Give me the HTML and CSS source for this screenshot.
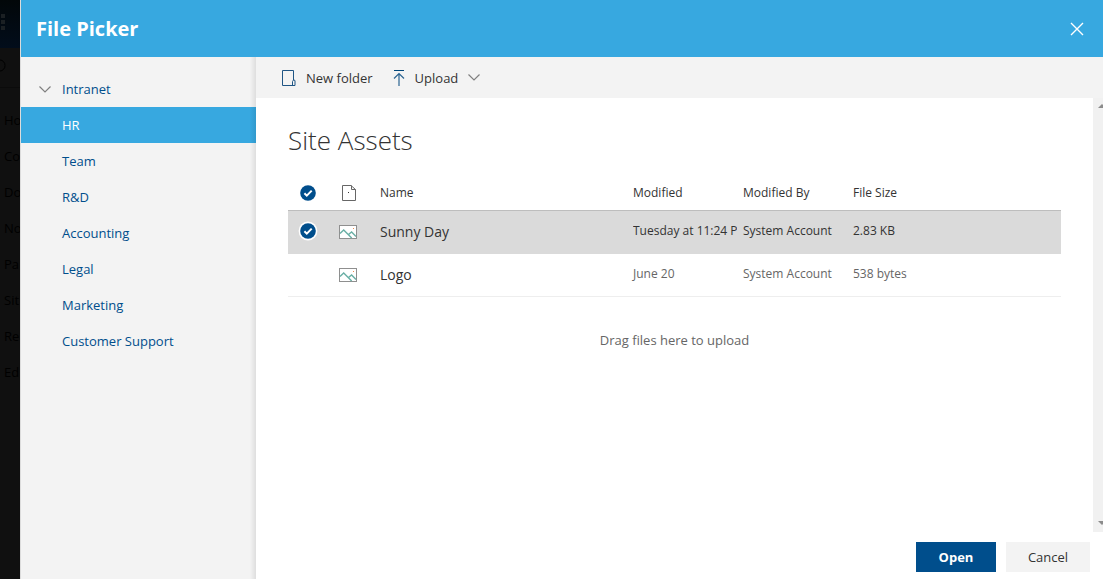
FILE: index.html
```html
<!DOCTYPE html>
<html lang="en">
<head>
<meta charset="utf-8">
<title>File Picker</title>
<link rel="stylesheet" href="styles.css">
</head>
<body>
<svg class="defs" aria-hidden="true">
  <symbol id="check" viewBox="0 0 20 20">
    <circle cx="10" cy="10" r="9.4" fill="#fff"/>
    <circle cx="10" cy="10" r="7.8" fill="#004e8c"/>
    <path d="M6.4 10.2l2.4 2.4 4.9-5" fill="none" stroke="#fff" stroke-width="2"/>
  </symbol>
  <symbol id="picture" viewBox="0 0 18 14">
    <rect x=".5" y=".5" width="17" height="13" fill="#fff" stroke="#8f8f8f"/>
    <path d="M1 8.5L4.7 5l8 8M9.5 9.5L12.6 7 17 11.5" fill="none" stroke="#69afa5" stroke-width="1.4"/>
    <rect x="14" y="3" width="1" height="1" fill="#f08a50"/>
  </symbol>
  <symbol id="chevron" viewBox="0 0 12 7">
    <path d="M.5.5L6 6 11.5.5" fill="none" stroke="#808080" stroke-width="1.2"/>
  </symbol>
</svg>
<div class="screen">
  <div class="backdrop" aria-hidden="true">
    <div class="suite"><svg width="5" height="17" viewBox="0 0 5 17"><path d="M1 0h4v4H1zM1 6h4v4H1zM1 12h4v4H1z" fill="#1b2023"/></svg></div>
    <div class="search"><svg width="6" height="14" viewBox="0 0 6 14"><path d="M0 1a5 5.5 0 0 1 0 11" fill="none" stroke="#000"/></svg></div>
    <ul class="under">
      <li>Ho</li><li>Co</li><li>Do</li><li>No</li><li>Pa</li><li>Sit</li><li>Re</li><li>Ed</li>
    </ul>
  </div>
  <div class="dialog" role="dialog" aria-labelledby="title">
    <header class="header">
      <h1 id="title">File Picker</h1>
      <button class="close" aria-label="Close"><svg width="14" height="14" viewBox="0 0 14 14"><path d="M1 1l12 12M13 1L1 13" stroke="#fff" stroke-width="1.4"/></svg></button>
    </header>
    <div class="body">
      <nav class="nav">
        <div class="node"><button class="toggle" aria-label="Collapse Intranet"><svg width="12" height="7"><use href="#chevron"/></svg></button><a href="#">Intranet</a></div>
        <div class="node selected"><a href="#">HR</a></div>
        <div class="node"><a href="#">Team</a></div>
        <div class="node"><a href="#">R&amp;D</a></div>
        <div class="node"><a href="#">Accounting</a></div>
        <div class="node"><a href="#">Legal</a></div>
        <div class="node"><a href="#">Marketing</a></div>
        <div class="node"><a href="#">Customer Support</a></div>
      </nav>
      <main class="main">
        <div class="toolbar">
          <button class="command"><svg width="14" height="16" viewBox="0 0 14 16"><path d="M11 15.5H.5V.5h11V10M10.5 15.5v-4l1-1.5h1l.5 1v4.500z" fill="none" stroke="#1f5584"/></svg>New folder</button>
          <button class="command"><svg width="12" height="16" viewBox="0 0 12 16"><path d="M1 .5h10" stroke="#004578"/><path d="M6 16V4M1 8.5L6 3.5l5 5" fill="none" stroke="#2c6592" stroke-width="1.2"/></svg>Upload<svg width="12" height="7"><use href="#chevron"/></svg></button>
        </div>
        <div class="scroller">
          <section class="content">
            <h2>Site Assets</h2>
            <table>
              <colgroup><col class="c-check"><col class="c-icon"><col><col class="c-meta"><col class="c-meta"><col class="c-size"></colgroup>
              <thead>
                <tr>
                  <th><svg width="20" height="20" role="img" aria-label="All selected"><use href="#check"/></svg></th>
                  <th><svg class="doc" width="14" height="16" viewBox="0 0 14 16" role="img" aria-label="File type"><path d="M.5.5H9L13.5 4.5v11H.5zM9.5 .5v4h4" fill="none" stroke="#666"/><rect x="6" y="7" width="1" height="1" fill="#333"/></svg></th>
                  <th>Name</th><th>Modified</th><th>Modified By</th><th>File Size</th>
                </tr>
              </thead>
              <tbody>
                <tr class="picked">
                  <td><svg width="20" height="20" role="img" aria-label="Selected"><use href="#check"/></svg></td>
                  <td class="icon"><svg width="18" height="14"><use href="#picture"/></svg></td>
                  <td class="name">Sunny Day</td><td><div class="clip">Tuesday at 11:24 P</div></td><td>System Account</td><td>2.83 KB</td>
                </tr>
                <tr>
                  <td></td>
                  <td class="icon"><svg width="18" height="14"><use href="#picture"/></svg></td>
                  <td class="name">Logo</td><td>June 20</td><td>System Account</td><td>538 bytes</td>
                </tr>
              </tbody>
            </table>
            <p class="drop">Drag files here to upload</p>
          </section>
          <div class="track" aria-hidden="true">
            <svg width="5" height="4" viewBox="0 0 5 4"><path d="M0 4L4 0l4 4z" fill="#8c8c8c"/></svg>
            <svg width="5" height="4" viewBox="0 0 5 4"><path d="M0 0h8L4 4z" fill="#8c8c8c"/></svg>
          </div>
        </div>
        <footer class="footer">
          <button class="action primary">Open</button>
          <button class="action cancel">Cancel</button>
        </footer>
      </main>
    </div>
  </div>
</div>
</body>
</html>
```
FILE: styles.css
```css
* { box-sizing: border-box; }
body {
  margin: 0;
  font: 13px/20px "Open Sans", "Noto Sans", sans-serif;
  color: #333;
  background: #fff;
}
button { border: 0; padding: 0; background: none; font: inherit; color: inherit; }
svg { display: block; flex: none; }
h1, h2, p, ul { margin: 0; padding: 0; }
.defs { position: absolute; width: 0; height: 0; }

.screen { display: flex; min-height: 100vh; }
.backdrop { flex: none; width: 20px; overflow: hidden; background: #101010; }
.suite { height: 48px; padding-top: 14px; background: linear-gradient(#020709, #020d1b); }
.search { height: 40px; padding-top: 11px; border-bottom: 1px solid #0b0b0b; }
.under { padding: 14px 0 0 4px; list-style: none; color: #000; white-space: nowrap; }
.under li { height: 36px; line-height: 36px; }

.dialog { flex: 1; min-width: 0; display: flex; flex-direction: column; border-left: 1px solid #dcdcdc; }
.header {
  display: flex;
  align-items: center;
  justify-content: space-between;
  height: 57px;
  padding: 0 19px 0 15px;
  background: #37a8e0;
  color: #fff;
}
.header h1 { font-size: 20px; line-height: 28px; font-weight: 700; }
.close { height: 16px; }

.body { flex: 1; display: flex; }
.nav {
  flex: none;
  width: 235px;
  padding-top: 14px;
  background: linear-gradient(to left, #dedede, #f3f3f3 6px);
}
.node { display: flex; align-items: center; height: 36px; padding-left: 18px; color: #004e8c; }
.node a { color: inherit; text-decoration: none; margin-left: 23px; }
.toggle { width: 12px; }
.toggle + a { margin-left: 11px; }
.selected { background: linear-gradient(to left, #3199cc, #37a8e0 6px); color: #fff; }

.main { flex: 1; min-width: 0; display: flex; flex-direction: column; }
.toolbar { display: flex; gap: 20px; height: 41px; padding: 0 26px; background: #f3f3f3; }
.command { display: flex; align-items: center; gap: 10px; }
.scroller { flex: 1; display: flex; }
.content { flex: 1; min-width: 0; padding: 24px 32px 0; }
.content h2 { font-size: 26px; line-height: 36px; font-weight: 300; margin-bottom: 18px; }

table { width: 100%; table-layout: fixed; border-collapse: collapse; font-size: 12px; line-height: 16px; }
.c-check { width: 40px; }
.c-icon { width: 40px; }
.c-meta { width: 110px; }
.c-size { width: 220px; }
th, td { padding: 0 0 0 12px; text-align: left; font-weight: 400; white-space: nowrap; }
th:first-child, td:first-child { padding-left: 10px; }
th:nth-child(2), td:nth-child(2) { padding-left: 11px; }
th { height: 34px; border-bottom: 1px solid #bdbdbd; }
.doc { margin-left: 3px; }
td { height: 43px; padding-bottom: 2px; color: #666; border-bottom: 1px solid #eee; }
.picked td { background: #dadada; color: #333; border-bottom-color: #dadada; }
td.icon { padding-bottom: 0; }
td.name { padding-bottom: 0; font-size: 14px; color: #333; }
.clip { overflow: hidden; margin-right: -6px; }
.drop { margin-top: 33px; text-align: center; color: #666; }

.track {
  flex: none;
  display: flex;
  flex-direction: column;
  justify-content: space-between;
  align-items: flex-end;
  width: 10px;
  padding: 6px 0 7px;
  background: #f1f1f1;
}
.footer { display: flex; justify-content: flex-end; gap: 10px; height: 47px; padding: 10px 13px 7px; }
.action { font-size: 13px; }
.primary { width: 80px; background: #004e8c; color: #fff; font-weight: 700; }
.cancel { width: 84px; background: #f3f3f3; }
```
